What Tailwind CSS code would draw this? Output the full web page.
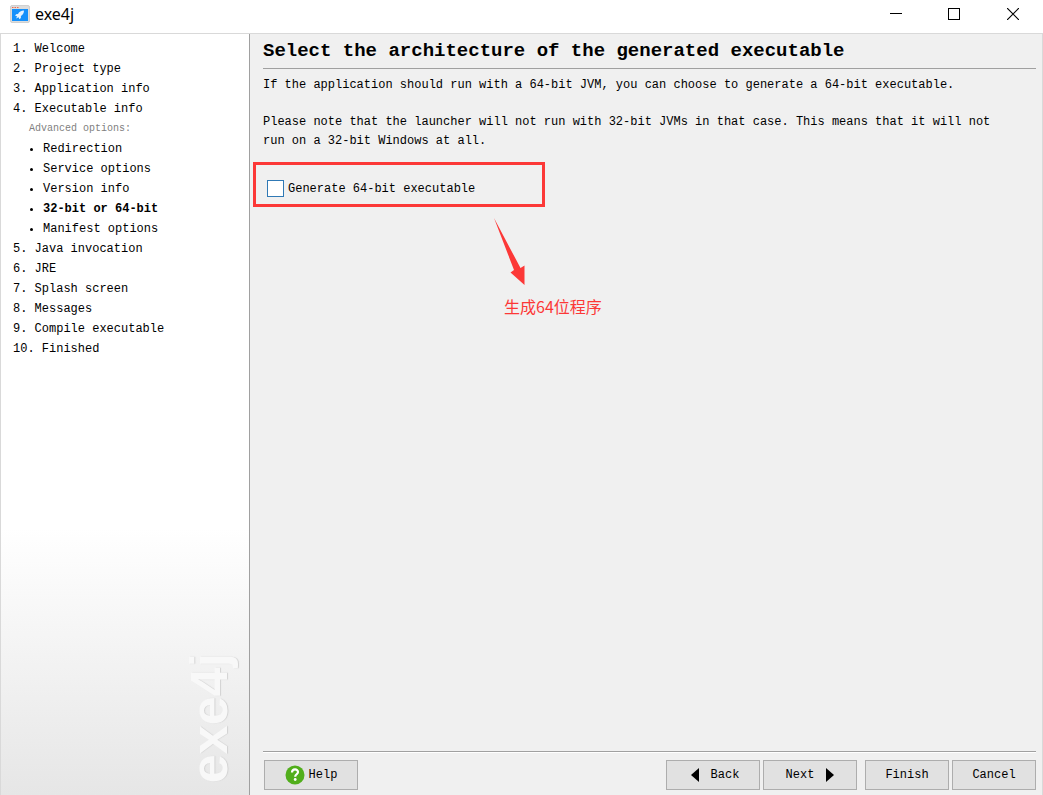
<!DOCTYPE html>
<html lang="en">
<head>
    <meta charset="UTF-8">
    <meta name="viewport" content="width=device-width, initial-scale=1.0">
    <title>exe4j</title>
    <script src="https://cdn.jsdelivr.net/npm/@tailwindcss/browser@4"></script>
</head>
<body class="h-screen flex flex-col overflow-hidden bg-[#f0f0f0] font-['Liberation_Mono',monospace] text-[12px] text-black">
    <!-- Title bar -->
    <header class="h-[33px] shrink-0 flex items-start justify-between bg-white">
        <div class="flex items-center h-7 pl-[10px] gap-[5px]">
            <svg class="w-5 h-[18px]" viewBox="0 0 20 18">
                <rect x="0.5" y="0.5" width="19" height="17" rx="1.5" fill="#dcdcdc" stroke="#d0d0d0"/>
                <path d="M2 2.500h1.500M4.500 2.500H6M7 2.500h1.500" stroke="#ee6a50" stroke-width="1.200"/>
                <rect x="2" y="4" width="16" height="12" fill="#1490fb"/>
                <path d="M14 5.500c-3 0-5 1.500-6 3.500l-2 .3-.8 1.700 2 .2-1.200 2.300 2.600-1.200.8 1.900 1.500-1.200v-2c2-1.200 3.100-3 3.100-5.500z" fill="#e4f2ff"/>
            </svg>
            <h1 class="font-['Noto_Sans',sans-serif] text-base leading-7">exe4j</h1>
        </div>
        <div class="flex">
            <button class="w-[58px] h-7 grid place-items-center" aria-label="Minimize">
                <svg class="w-3 h-3" viewBox="0 0 12 12"><path d="M0 5.500h12" stroke="#000"/></svg>
            </button>
            <button class="w-[58px] h-7 grid place-items-center" aria-label="Maximize">
                <svg class="w-3 h-3" viewBox="0 0 12 12"><rect x="0.5" y="0.5" width="11" height="11" fill="none" stroke="#000"/></svg>
            </button>
            <button class="w-[60px] h-7 grid place-items-center" aria-label="Close">
                <svg class="w-3 h-3" viewBox="0 0 12 12"><path d="M0 0l12 12M12 0L0 12" stroke="#000" stroke-width="1.200"/></svg>
            </button>
        </div>
    </header>

    <div class="flex-1 min-h-0 flex border-t border-x border-[#d9d9d9]">
        <!-- Wizard steps -->
        <nav class="relative w-[249px] shrink-0 pt-[5px] pl-3 leading-5 border-r border-[#a0a0a0] bg-linear-to-b from-white from-65% to-[#e6e6e6]">
            <ol>
                <li>1. Welcome</li>
                <li>2. Project type</li>
                <li>3. Application info</li>
                <li>4. Executable info
                    <p class="pl-4 text-[10px] leading-5 text-[#808080]">Advanced options:</p>
                    <ul class="pl-4">
                        <li class="flex items-center gap-[10px]"><span class="w-[3px] h-[3px] ml-px rounded-full bg-black"></span>Redirection</li>
                        <li class="flex items-center gap-[10px]"><span class="w-[3px] h-[3px] ml-px rounded-full bg-black"></span>Service options</li>
                        <li class="flex items-center gap-[10px]"><span class="w-[3px] h-[3px] ml-px rounded-full bg-black"></span>Version info</li>
                        <li class="flex items-center gap-[10px] font-bold"><span class="w-[3px] h-[3px] ml-px rounded-full bg-black"></span>32-bit or 64-bit</li>
                        <li class="flex items-center gap-[10px]"><span class="w-[3px] h-[3px] ml-px rounded-full bg-black"></span>Manifest options</li>
                    </ul>
                </li>
                <li>5. Java invocation</li>
                <li>6. JRE</li>
                <li>7. Splash screen</li>
                <li>8. Messages</li>
                <li>9. Compile executable</li>
                <li>10. Finished</li>
            </ol>
            <div class="absolute right-[14px] bottom-3 rotate-180 [writing-mode:vertical-rl] font-['Liberation_Sans',sans-serif] font-bold text-[52px] leading-[52px] text-[#f8f8f8] [text-shadow:0_1px_1px_#d2d2d2]">exe4j</div>
        </nav>

        <main class="flex-1 flex flex-col pl-[13px] pr-[6px] pb-[5px]">
            <h2 class="pt-[5px] pb-1 text-[19px] leading-[25px] font-bold border-b border-[#a0a0a0]">Select the architecture of the generated executable</h2>

            <div class="pt-[7px] leading-[19px]">
                <p class="mb-[18px]">If the application should run with a 64-bit JVM, you can choose to generate a 64-bit executable.</p>
                <p>Please note that the launcher will not run with 32-bit JVMs in that case. This means that it will not<br>run on a 32-bit Windows at all.</p>
            </div>

            <div class="relative mt-[29px] pl-1">
                <label class="flex items-center gap-1 h-[17px]">
                    <input type="checkbox" class="appearance-none w-[17px] h-[17px] bg-white border border-[#3079b5]">
                    Generate 64-bit executable
                </label>

                <!-- Red marker, arrow and note -->
                <div class="absolute -left-[10px] -top-[18px] w-[292px] h-[45px] border-3 border-[#fc3837] pointer-events-none"></div>
                <svg class="absolute left-[231px] top-[38px] w-8 h-[67px]" viewBox="0 0 32 67">
                    <path d="M0 0L26.500 50L30.500 47.500V67L16.500 54.500L20 52z" fill="#fc3837"/>
                </svg>
                <p class="absolute left-[241px] top-[114px] font-['Noto_Sans_CJK_SC',sans-serif] text-base leading-6 text-[#fc3837] whitespace-nowrap">生成64位程序</p>
            </div>

            <footer class="mt-auto pt-2 flex items-center border-t border-[#a0a0a0] shadow-[inset_0_1px_0_#ffffff]">
                <button class="ml-px w-[94px] h-[30px] flex items-center justify-center gap-1 bg-[#e1e1e1] border border-[#adadad]">
                    <svg class="w-5 h-5" viewBox="0 0 20 20">
                        <circle cx="10" cy="10" r="9.500" fill="#51ae1b"/>
                        <path d="M7 7.500c0-4 6-4 6-.5 0 2.300-2.800 2.300-2.800 4.800" fill="none" stroke="#fff" stroke-width="2.200"/>
                        <circle cx="10.200" cy="14.500" r="1.400" fill="#fff"/>
                    </svg>
                    Help
                </button>
                <div class="ml-auto flex gap-[3px]">
                    <button class="w-[94px] h-[30px] flex items-center justify-center gap-3 pl-1 bg-[#e1e1e1] border border-[#adadad]">
                        <svg class="w-2 h-[14px]" viewBox="0 0 8 14"><path d="M8 0v14L0 7z"/></svg>
                        Back
                    </button>
                    <button class="w-[94px] h-[30px] flex items-center justify-center gap-3 bg-[#e1e1e1] border border-[#adadad]">
                        Next
                        <svg class="w-2 h-[14px]" viewBox="0 0 8 14"><path d="M0 0v14l8-7z"/></svg>
                    </button>
                </div>
                <div class="ml-2 flex gap-[3px]">
                    <button class="w-[84px] h-[30px] bg-[#e1e1e1] border border-[#adadad]">Finish</button>
                    <button class="w-[84px] h-[30px] bg-[#e1e1e1] border border-[#adadad]">Cancel</button>
                </div>
            </footer>
        </main>
    </div>
</body>
</html>
